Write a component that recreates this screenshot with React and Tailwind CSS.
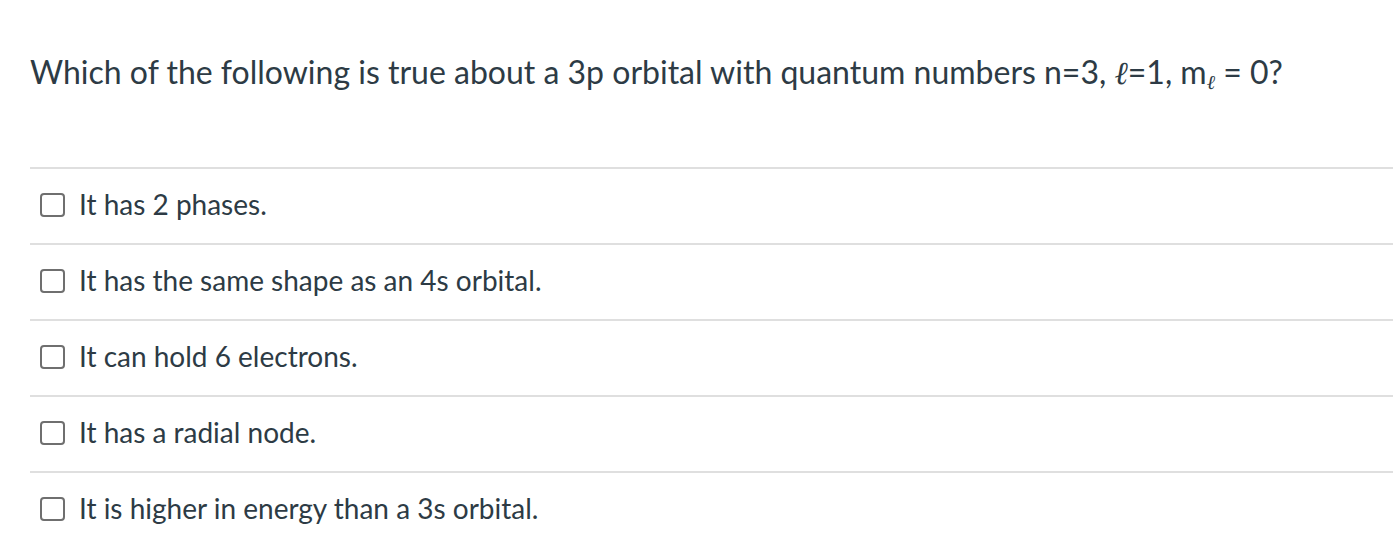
const answers = [
  "It has 2 phases.",
  "It has the same shape as an 4s orbital.",
  "It can hold 6 electrons.",
  "It has a radial node.",
  "It is higher in energy than a 3s orbital.",
]

const App = () => {
  return (
    <div className="bg-white min-h-[554px] text-[#2d3b45]" style={{ fontFamily: "Lato, 'Open Sans', sans-serif" }}>
      <div className="pl-[30px] pt-[48px] pb-[70px]">
        <p className="text-[32px] leading-[48px] whitespace-nowrap">
          Which of the following is true about a 3p orbital with quantum numbers n=3,{" "}
          <span className="italic" style={{ fontFamily: "'DejaVu Serif', serif" }}>ℓ</span>=1, m
          <sub className="text-[20px] italic" style={{ fontFamily: "'DejaVu Serif', serif" }}>ℓ</sub> = 0?
        </p>
      </div>
      <div className="ml-[30px]">
        {answers.map((a) => (
          <div key={a} className="border-t-2 border-[#dfdfdf] h-[76px] flex items-center pl-[10px] pb-[4px]">
            <span className="w-[25px] h-[24px] border-2 border-[#6f6f6f] rounded-[4px] shrink-0 mt-[2px]" />
            <span className="ml-[14px] text-[28px] leading-none">{a}</span>
          </div>
        ))}
      </div>
    </div>
  )
}

export default App
